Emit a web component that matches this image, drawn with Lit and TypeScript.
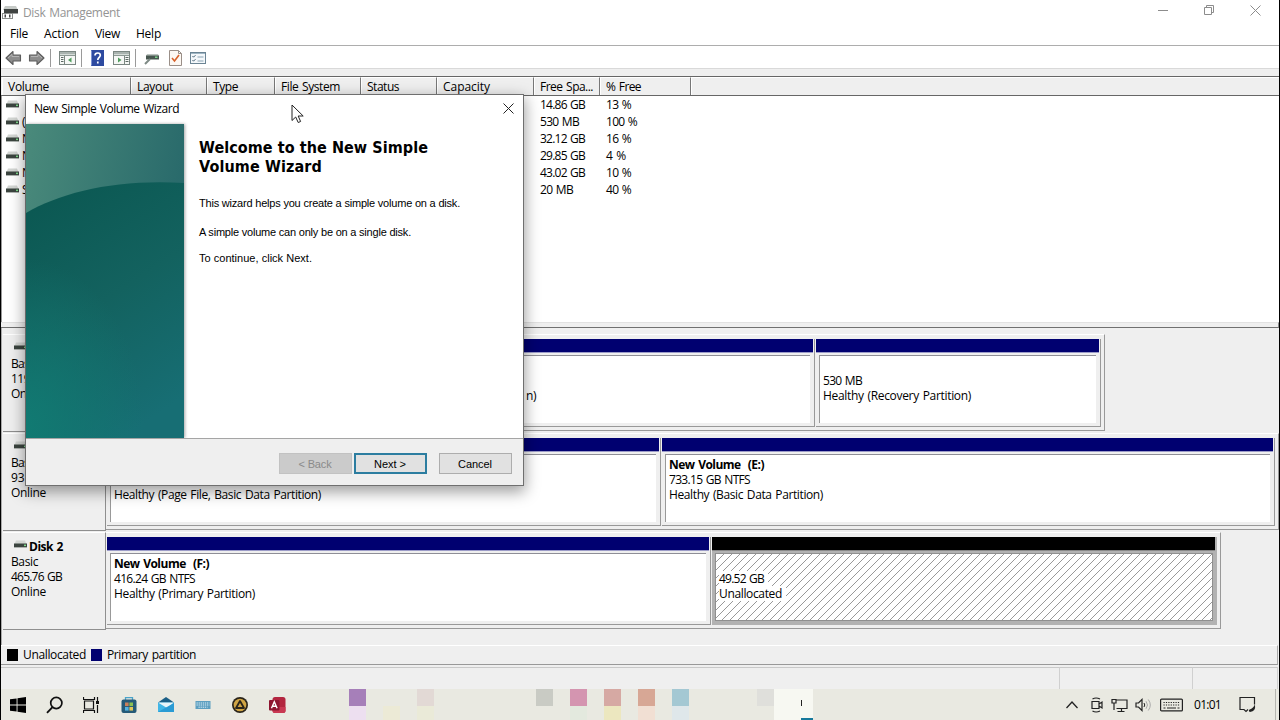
import { LitElement, html, css, nothing } from "lit";
import { customElement, property } from "lit/decorators.js";
import { classMap } from "lit/directives/class-map.js";

/* A run of text tracked so that it fills a given advance width. */
@customElement("fit-text")
class FitText extends LitElement {
  @property({ type: Number }) w = 0;
  @property() text = "";
  static styles = css`
    :host { display: inline-block; white-space: pre; }
    .run { display: inline-block; white-space: pre; }
  `;
  render() {
    return html`<span class="run">${this.text}</span>`;
  }
  updated() {
    const run = this.renderRoot.querySelector(".run") as HTMLElement;
    if (!run || !this.w || !this.text) return;
    run.style.letterSpacing = "0px";
    const natural = run.getBoundingClientRect().width;
    run.style.letterSpacing = `${(this.w - natural) / this.text.length}px`;
  }
}

const t = (text: string, w = 0) => html`<fit-text .text=${text} .w=${w}></fit-text>`;

const drive = html`<svg class="drive" width="13" height="9" viewBox="0 0 13 9">
  <path d="M2 .5h9l1.500 3.500H.500z" fill="#d3d6d3" /><rect y="3.500" width="13" height="3.800" fill="#3b443f" />
  <rect y="7.200" width="13" height=".8" fill="#aab0ac" /><rect x="10" y="4.600" width="2" height="1.500" fill="#7fdc8c" /></svg>`;

const arrow = (flip: boolean) => html`<svg width="17" height="16" viewBox="0 0 17 16">
  <path transform=${flip ? "translate(17 0) scale(-1 1)" : ""} d="M1 8 8 1.5V5h7.5v6H8v3.5z" fill="#8d8d8d" stroke="#5c5c5c" stroke-width="1.1" stroke-linejoin="round" />
  <path transform=${flip ? "translate(17 0) scale(-1 1)" : ""} d="M3 8 7 4.3V6.5h7" fill="none" stroke="#b4b4b4" /></svg>`;

const paneIcon = (right: boolean) => html`<svg width="17" height="14" viewBox="0 0 17 14">
  <rect x=".5" y=".5" width="16" height="13" fill="#f6f8f6" stroke="#7b8782" />
  <rect x="1" y="1" width="15" height="2.4" fill="#a9b3af" /><path d="M1 4.5h15" stroke="#8d9994" />
  <path d=${right ? "M11.5 5v8.5" : "M5.5 5v8.5"} stroke="#7b8782" />
  <path d=${right ? "M12.5 6.5h3M12.5 8.5h3M12.5 10.5h3" : "M2 6.5h2.500M2 8.500h2.500M2 10.500h2.500"} stroke="#5e6b66" />
  <path d=${right ? "M5 6.500v5l3.500-2.500z" : "M12.500 6.500v5L9 9z"} fill="#4f9d5d" /></svg>`;

interface Part { w: number; lines: [string, number, boolean?][]; free?: boolean; tail?: boolean; }
interface Disk { name: string; info: [string, number][]; parts: Part[]; }

const disks: Disk[] = [
  { name: "", info: [["Bas", 18], ["119", 19], ["Onl", 18]], parts: [
    { w: 708, tail: true, lines: [["", 0], ["", 0], ["n)", 10]] },
    { w: 285, lines: [["", 0], ["530 MB", 39], ["Healthy (Recovery Partition)", 148]] } ] },
  { name: "", info: [["Bas", 18], ["931", 20], ["Online", 35]], parts: [
    { w: 554, lines: [["", 0], ["", 0], ["Healthy (Page File, Basic Data Partition)", 207]] },
    { w: 613, lines: [["New Volume  (E:)", 95, true], ["733.15 GB NTFS", 81], ["Healthy (Basic Data Partition)", 154]] } ] },
  { name: "Disk 2", info: [["Basic", 27], ["465.76 GB", 51], ["Online", 35]], parts: [
    { w: 604, lines: [["New Volume  (F:)", 95, true], ["416.24 GB NTFS", 81], ["Healthy (Primary Partition)", 141]] },
    { w: 505, free: true, lines: [["", 0], ["49.52 GB", 45], ["Unallocated", 63]] } ] },
];

const columns: [string, number, number][] = [
  ["Volume", 129, 41], ["Layout", 76, 36], ["Type", 68, 25], ["File System", 86, 59],
  ["Status", 76, 32], ["Capacity", 97, 47], ["Free Spa...", 66, 53], ["% Free", 91, 35],
];

const volumes: [string, string, number, string, number][] = [
  ["", "14.86 GB", 45, "13 %", 25], ["(", "530 MB", 39, "100 %", 31], ["N", "32.12 GB", 45, "16 %", 25],
  ["N", "29.85 GB", 45, "4 %", 20], ["N", "43.02 GB", 45, "10 %", 25], ["S", "20 MB", 33, "40 %", 25],
];

/* column, row, colour of each blurred task button tile */
const tiles: [number, number, string][] = [
  [1, 1, "#a67fb9"], [5, 1, "#e2d9d5"], [12, 1, "#c9cbc4"], [14, 1, "#d495b0"], [16, 1, "#d6a9a3"],
  [18, 1, "#d7a795"], [20, 1, "#a4c8d3"], [25, 1, "#dfdfdb"], [1, 2, "#eddff0"], [3, 2, "#ecead6"],
  [5, 2, "#eaead8"], [14, 2, "#e3e9de"], [16, 2, "#ece7bf"], [18, 2, "#f1dfd3"], [20, 2, "#dfe7ea"],
];

@customElement("app-root")
class AppRoot extends LitElement {
  static styles = css`
    :host { display: block; }
    * { box-sizing: border-box; }
    svg { display: block; flex: none; }
    .screen { position: relative; width: 1280px; height: 720px; overflow: hidden; display: flex; flex-direction: column;
      background: #efefef; border-left: 1px solid #000; border-right: 1px solid #000; color: #000; word-spacing: 1px;
      font: 12px/15px "Open Sans", "Noto Sans", sans-serif; }
    .title { height: 24px; background: #fff; display: flex; align-items: center; color: #949494; padding-left: 1px; flex: none; }
    .title .name { flex: 1; padding-left: 5px; }
    .wins { display: flex; gap: 35px; padding: 0 18px 4px 0; }
    .menu { height: 22px; background: #fff; border-bottom: 1px solid #adadad; display: flex; padding: 2px 0 0 9px; gap: 16px; flex: none; }
    .tools { height: 22px; background: #fff; display: flex; align-items: center; padding: 2px 0 0 4px; flex: none; }
    .sep { width: 1px; height: 18px; background: #9a9a9a; }
    .strip { height: 8px; border-top: 1px solid #d9d9d9; flex: none; }
    .head { height: 20px; border-top: 1px solid #666; border-bottom: 1px solid #666; display: flex; padding-left: 1px; flex: none; }
    .col { border-right: 1px solid #777; border-top: 1px solid #fff; border-left: 1px solid #fff; padding: 1px 0 0 5px; }
    .col.rest { flex: 1; border-right: 0; }
    .list { height: 226px; background: #fff; flex: none; border-left: 1px solid #999; }
    .vol { display: flex; height: 17px; align-items: center; padding-left: 4px; }
    .drive { flex: none; }
    .vol .nm { width: 521px; padding-left: 3px; flex: none; }
    .vol .fr { width: 66px; flex: none; }
    .split { height: 6px; border-bottom: 1px solid #707070; border-top: 1px solid #e2e2e2; border-right: 1px solid #888; flex: none; }
    .graph { height: 317px; padding: 6px 0 0 1px; display: flex; flex-direction: column; gap: 1px; flex: none; border-left: 1px solid #aaa; }
    .disk { display: flex; height: 98px; align-items: flex-start; }
    .label { width: 103px; height: 98px; border-top: 1px solid #fff; border-right: 1px solid #8f8f8f; border-bottom: 1px solid #8f8f8f; padding: 6px 0 0 8px; flex: none; }
    .dname { height: 15px; display: flex; font-weight: 700; gap: 2px; padding: 0 0 0 3px; }
    .dname .drive { margin-top: 1px; }
    .ln { height: 15px; white-space: pre; }
    .parts { display: flex; flex: none; gap: 1px; height: 97px; border-top: 1px solid #fff; border-right: 1px solid #999; border-bottom: 1px solid #999; padding: 4px 3px 3px 1px; }
    .part { height: 88px; flex: none; border-right: 1px solid #999; border-bottom: 1px solid #999; display: flex; flex-direction: column; }
    .bar { height: 14px; background: #000070; border-bottom: 1px solid #9c9cc8; margin-right: 1px; flex: none; }
    .box { margin: 2px 4px 3px 3px; flex: 1; background: #fff; border-top: 1px solid #8e8e96; border-left: 1px solid #999; padding: 2px 0 0 3px; }
    .box.tail { padding-left: 415px; }
    .free { background: #b2b2b2; border-color: #b2b2b2; }
    .free .bar { background: #000; border-color: #888; }
    .free .box { border: 1px solid #8f8f8f; margin-right: 3px;
      background: repeating-linear-gradient(135deg, #fff 0 5px, #999 5px 5.657px); }
    .free .ln > * { background: #fff; height: 15px; padding-right: 4px; }
    .bold { font-weight: 700; }
    .legend { height: 20px; border-top: 1px solid #fff; border-bottom: 1px solid #999; border-right: 1px solid #aaa; margin-right: 1px; display: flex; align-items: center; padding: 0 0 1px 6px; gap: 5px; flex: none; }
    .key { width: 11px; height: 12px; background: #000; }
    .key.primary { background: #000070; }
    .status { height: 24px; padding-top: 2px; display: flex; flex: none; }
    .cell { border-top: 1px solid #c9c9c9; border-right: 1px solid #d0d0d0; }
    .c1 { width: 1059px; } .c2 { width: 133px; } .c3 { width: 85px; }
    .task { height: 31px; background: #e9e9e1; display: flex; flex: none; }
    .pins { width: 348px; display: flex; padding: 7px 0 0 8px; gap: 19px; }
    .pins svg { width: 18px; height: 18px; }
    .tiles { display: grid; grid-template-columns: repeat(25, 17px); grid-template-rows: 17px 14px; }
    .active { width: 39px; background: #f7f8f2; display: flex; flex-direction: column; align-items: flex-end; justify-content: space-between; padding-top: 11px; }
    .tick { width: 12px; height: 6px; display: block; border-left: 1.500px solid #222; }
    .under { width: 12px; height: 2px; background: #16799c; }
    .tray { flex: 1; display: flex; align-items: center; padding: 0 3px 0 252px; }
    .clock { width: 27px; margin: 0 18px 0 11px; }
    .edge { width: 1px; height: 31px; background: #b5b5af; margin: 0 0 0 auto; }

    .dialog { position: absolute; left: 24px; top: 94px; width: 499px; height: 392px; background: #fff; border: 1px solid #6f6f6f;
      box-shadow: 0 5px 14px 1px rgba(0, 0, 0, .38); display: flex; flex-direction: column; }
    .dtitle { height: 29px; display: flex; justify-content: space-between; padding: 6px 9px 0 8px; }
    .dtitle svg { margin-top: 2px; }
    .dmain { display: flex; height: 314px; }
    .art { box-shadow: 1px 0 3px rgba(0, 0, 0, .35); width: 158px; }
    .copy { padding: 14px 0 0 15px; font: 11px/14px "Liberation Sans", Arial, sans-serif; word-spacing: 0; }
    .copy .h { font: 700 16px/19px "DejaVu Sans Condensed", "DejaVu Sans", sans-serif; height: 19px; color: #000; }
    .p1 { margin-top: 20px; height: 14px; } .p2 { margin-top: 15px; height: 14px; } .p3 { margin-top: 12px; height: 14px; }
    .foot { flex: 1; background: #efefef; border-top: 1px solid #a5a5a5; padding: 14px 11px 0 0; display: flex; justify-content: flex-end; word-spacing: 0;
      font: 11px/13px "Liberation Sans", Arial, sans-serif; }
    .btn { width: 73px; height: 21px; display: flex; align-items: center; justify-content: center; background: #e1e1e1; border: 1px solid #adadad; padding: 1px 1px 0 0; }
    .btn.off { background: #cbcbcb; border-color: #c2c2c2; color: #8a8a8a; margin-right: 2px; }
    .btn.main { border: 2px solid #2c7da0; margin-right: 12px; }
    .cursor { position: absolute; left: 290px; top: 104px; }
  `;

  private disk(d: Disk) {
    return html`<div class="disk">
      <div class="label">
        <div class="dname">${drive}${d.name ? t(d.name, 34) : nothing}</div>
        ${d.info.map(([s, w]) => html`<div class="ln">${t(s, w)}</div>`)}
      </div>
      <div class="parts">${d.parts.map((p) => html`
        <div class=${classMap({ part: true, free: !!p.free })} style="width:${p.w}px">
          <div class="bar"></div>
          <div class=${classMap({ box: true, tail: !!p.tail })}>
            ${p.lines.map(([s, w, b]) => html`<div class=${classMap({ ln: true, bold: !!b })}>${s ? t(s, w) : nothing}</div>`)}
          </div>
        </div>`)}</div>
    </div>`;
  }

  render() {
    return html`<div class="screen">
      <div class="title">
        <svg width="16" height="15" viewBox="0 0 16 15"><path d="M3 1h11l2 4H1z" fill="#c6cac7" /><rect x="2" y="4" width="14" height="4.500" fill="#3f4341" />
          <path d="M0 8h11v6H0z" fill="#8a8d8b" /><rect x="1" y="9" width="9" height="4" fill="#fff" /><rect x="2.500" y="9.500" width="1.500" height="3" fill="#444" /><rect x="7" y="9.500" width="1.500" height="3" fill="#444" /></svg>
        <div class="name">${t("Disk Management", 97)}</div>
        <div class="wins">
          <svg width="11" height="11"><path d="M0 5.500h10" stroke="#8c8c8c" /></svg>
          <svg width="11" height="11"><path d="M.5 2.500h7v7h-7zM2.500 2.500v-2h7v7h-2" fill="none" stroke="#8c8c8c" /></svg>
          <svg width="11" height="11"><path d="M.5.500l10 10M10.500.500l-10 10" stroke="#8c8c8c" /></svg>
        </div>
      </div>
      <div class="menu">${t("File", 18)}${t("Action", 35)}${t("View", 25)}${t("Help", 25)}</div>
      <div class="tools">
        ${arrow(false)}<span style="width:6px"></span>${arrow(true)}
        <span style="width:5px"></span><i class="sep"></i><span style="width:8px"></span>
        ${paneIcon(false)}
        <span style="width:5px"></span><i class="sep"></i><span style="width:9px"></span>
        <svg width="13" height="16" viewBox="0 0 13 16"><rect width="13" height="16" fill="#2d4aa0" /><path d="M.5.500v15" stroke="#7d93d3" />
          <path d="M4 5.600C4 3.900 5.200 3 6.700 3s2.600.9 2.600 2.300C9.300 7.300 6.800 7.400 6.800 10M6.800 11.500v2" fill="none" stroke="#fff" stroke-width="1.700" /></svg>
        <span style="width:9px"></span>${paneIcon(true)}
        <span style="width:5px"></span><i class="sep"></i><span style="width:8px"></span>
        <svg width="16" height="13" viewBox="0 0 16 13"><path d="M3 2h11l1 2H2z" fill="#bcc4c0" /><rect x="2" y="3.500" width="13" height="4" fill="#47564f" /><rect x="11" y="4.500" width="2.500" height="1.500" fill="#7ad08a" /><path d="M6 7 1 12" stroke="#7e8a85" stroke-width="2" /></svg>
        <span style="width:9px"></span>
        <svg width="13" height="16" viewBox="0 0 13 16"><path d="M.5.500h9l3 3v12H.500z" fill="#fdf8f3" stroke="#9a8f88" /><path d="M9.500.500v3h3" fill="none" stroke="#9a8f88" /><path d="m3 8 2.500 3L10 5" fill="none" stroke="#d8622a" stroke-width="1.600" /></svg>
        <span style="width:8px"></span>
        <svg width="16" height="12" viewBox="0 0 16 12"><rect x=".5" y=".5" width="15" height="11" fill="#f4f8fb" stroke="#6b8494" /><path d="M1 1.500h14" stroke="#9fb6c4" /><path d="m2.500 4 1 1.200 2-2M2.500 8l1 1.200 2-2" fill="none" stroke="#4a6576" /><path d="M7.500 5h6M7.500 9h6" stroke="#8aa3b3" /></svg>
      </div>
      <div class="strip"></div>
      <div class="head">
        ${columns.map(([s, w, tw]) => html`<div class="col" style="width:${w}px">${t(s, tw)}</div>`)}
        <div class="col rest"></div>
      </div>
      <div class="list">${volumes.map(([n, f, fw, p, pw]) => html`<div class="vol">${drive}
        <div class="nm">${n ? t(n) : nothing}</div><div class="fr">${t(f, fw)}</div><div>${t(p, pw)}</div></div>`)}</div>
      <div class="split"></div>
      <div class="graph">${disks.map((d) => this.disk(d))}</div>
      <div class="legend"><i class="key"></i>${t("Unallocated", 63)}<i class="key primary"></i>${t("Primary partition", 89)}</div>
      <div class="status"><div class="cell c1"></div><div class="cell c2"></div><div class="cell c3"></div></div>
      <div class="task">
        <div class="pins">
          <svg viewBox="0 0 18 18"><path d="M1 3.300 7.600 2.400v6.100H1zM8.500 2.200 17 1v7.500H8.500zM1 9.400h6.600v6.200L1 14.700zM8.500 9.400H17V17l-8.500-1.200z" fill="#000" /></svg>
          <svg viewBox="0 0 18 18"><circle cx="10.300" cy="7" r="5.600" fill="none" stroke="#111" stroke-width="1.700" /><path d="m6.500 11.200-5.500 5.600" stroke="#111" stroke-width="1.900" /></svg>
          <svg viewBox="0 0 18 18"><path d="M1.500 5h9v8h-9zM.5 1v2.500h11V1M.5 17v-2.500h11V17M14.500 1v4M14.500 9v8" fill="none" stroke="#111" stroke-width="1.200" /><rect x="13" y="5" width="3" height="3" fill="#111" /></svg>
          <svg viewBox="0 0 18 18"><path d="M5.500 4V1.700h7V4" fill="none" stroke="#4aa3c9" stroke-width="1.300" /><rect x="1.500" y="3.500" width="15" height="13.500" rx="2" fill="#255a78" /><rect x="5" y="6.500" width="3.600" height="3.600" fill="#c9805c" /><rect x="9.400" y="6.500" width="3.600" height="3.600" fill="#8cc152" /><rect x="5" y="11" width="3.600" height="3.600" fill="#53b3e2" /><rect x="9.400" y="11" width="3.600" height="3.600" fill="#e0c65b" /></svg>
          <svg viewBox="0 0 18 18"><path d="M1 6.500 9 1l8 5.500v3H1z" fill="#1b5f86" /><path d="M1 6.500h16V16H1z" fill="#41b6e6" /><path d="M1 6.500 10 12l7-5.500z" fill="#e8f5fa" /><path d="M1 16 17 7v9z" fill="#2a9bd4" /></svg>
          <svg viewBox="0 0 18 18"><rect x="1.500" y="5" width="15" height="8" fill="#5c9fc0" /><path d="M2.500 7h13M2.500 9h13M4.500 11.200h9" stroke="#d8ecf5" stroke-dasharray="1.300 .8" /></svg>
          <svg viewBox="0 0 18 18"><circle cx="9" cy="9" r="8" fill="#2a251b" /><circle cx="9" cy="9" r="6.300" fill="#d0a544" /><path d="M9 5 13 12H5z" fill="none" stroke="#2a251b" stroke-width="1.800" stroke-linejoin="round" /></svg>
          <svg viewBox="0 0 18 18"><rect x="4.500" y="1" width="13" height="16" rx="2.500" fill="#b3263f" /><path d="M4.500 11h13v3.500a2.500 2.500 0 0 1-2.500 2.500H7a2.500 2.500 0 0 1-2.500-2.500z" fill="#c93852" /><rect x="1" y="4" width="10.500" height="10.500" rx="1" fill="#8e1530" /><path d="m3.500 12.300 2.800-6.500 2.800 6.500M4.500 10.300h3.600" fill="none" stroke="#fff" stroke-width="1.400" /></svg>
        </div>
        <div class="tiles">${tiles.map(([c, r, k]) => html`<i style="grid-area:${r}/${c};background:${k}"></i>`)}</div>
        <div class="active"><i class="tick"></i><i class="under"></i></div>
        <div class="tray">
          <svg width="14" height="16" viewBox="0 0 14 16"><path d="m1.500 11 5.500-6 5.500 6" fill="none" stroke="#222" stroke-width="1.300" /></svg>
          <span style="width:11px"></span>
          <svg width="14" height="16" viewBox="0 0 14 16"><path d="M2 4.500h7v7H2zM9 7l3-2v6L9 9M2.500 2Q6 0 10 2M2.500 14q3.500 2 7.500 0" fill="none" stroke="#222" stroke-width="1.200" /></svg>
          <span style="width:7px"></span>
          <svg width="17" height="16" viewBox="0 0 17 16"><path d="M5 3h11v8.500H5.500M1 2.500h4v3.500H1zM3 6v7M10.500 11.500V14M6.500 14.500h7" fill="none" stroke="#222" stroke-width="1.200" /></svg>
          <span style="width:7px"></span>
          <svg width="17" height="16" viewBox="0 0 17 16"><path d="M1 6h2.500L7 2.500v11L3.500 10H1z" fill="none" stroke="#222" stroke-width="1.200" /><path d="M9 6q1.500 2 0 4" fill="none" stroke="#222" /><path d="M11 4.200q3 3.800 0 7.600M13.300 2.500q4 5.500 0 11" fill="none" stroke="#aaa" /></svg>
          <span style="width:8px"></span>
          <svg width="23" height="14" viewBox="0 0 23 14"><rect x=".6" y="1.100" width="21.800" height="11.800" rx="1" fill="none" stroke="#222" stroke-width="1.200" /><path d="M3.500 4.500h16M3.500 7h16" stroke="#222" stroke-dasharray="1.200 1.200" /><path d="M3.500 10h2M7 10h9M17.500 10h2" stroke="#222" /></svg>
          <div class="clock">${t("01:01", 27)}</div>
          <svg width="17" height="17" viewBox="0 0 17 17"><path d="M9 13.500 7 15.500l-2-2H1v-12h14.500v7" fill="none" stroke="#222" stroke-width="1.200" /><path d="M16 8.500q1 7-5 7.500-2-1-.5-2.500 3-.5 5.500-5" fill="#222" /></svg>
          <i class="edge"></i>
        </div>
      </div>

      <div class="dialog">
        <div class="dtitle">${t("New Simple Volume Wizard", 145)}
          <svg width="11" height="11" viewBox="0 0 11 11"><path d="M.5.500l10 10M.5 10.500l10-10" stroke="#222" /></svg></div>
        <div class="dmain">
          <svg class="art" width="158" height="314" viewBox="0 0 158 314">
            <defs>
              <linearGradient id="sky" x1="0" y1="0" x2="1" y2=".35"><stop offset="0" stop-color="#4a8a7b" /><stop offset="1" stop-color="#27686a" /></linearGradient>
              <linearGradient id="hill" x1=".2" y1="0" x2=".6" y2="1"><stop offset="0" stop-color="#0b5852" /><stop offset=".5" stop-color="#13625f" /><stop offset="1" stop-color="#176e74" /></linearGradient>
              <radialGradient id="glow" cx="0" cy=".95" r=".75"><stop offset="0" stop-color="#117a72" /><stop offset="1" stop-color="#117a72" stop-opacity="0" /></radialGradient>
            </defs>
            <rect width="158" height="314" fill="url(#sky)" />
            <path d="M0 89C36 68 90 55 158 59V314H0z" fill="url(#hill)" /><rect y="90" width="158" height="224" fill="url(#glow)" />
          </svg>
          <div class="copy">
            <div class="h">${t("Welcome to the New Simple", 229)}</div>
            <div class="h">${t("Volume Wizard", 123)}</div>
            <div class="p1">${t("This wizard helps you create a simple volume on a disk.", 261)}</div>
            <div class="p2">${t("A simple volume can only be on a single disk.", 212)}</div>
            <div class="p3">${t("To continue, click Next.", 113)}</div>
          </div>
        </div>
        <div class="foot">
          <div class="btn off">${t("< Back", 33)}</div><div class="btn main">${t("Next >", 32)}</div><div class="btn">${t("Cancel", 34)}</div>
        </div>
      </div>
      <svg class="cursor" width="14" height="20" viewBox="0 0 14 20"><path d="M1 1v15.500l3.700-3.500 2.500 5.500 2.400-1-2.400-5.500h5z" fill="#fff" stroke="#222" /></svg>
    </div>`;
  }
}
